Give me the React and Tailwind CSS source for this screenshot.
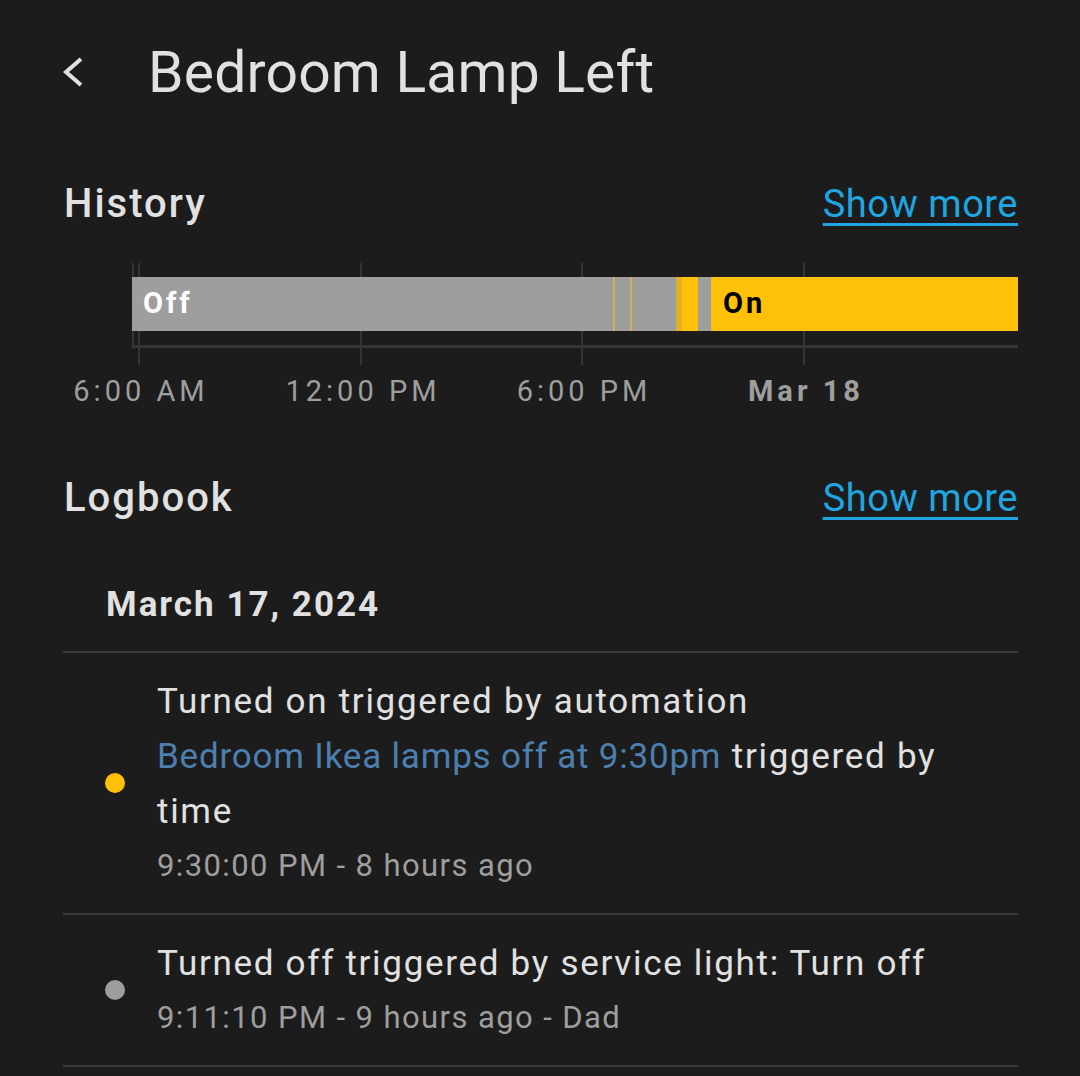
import React from 'react';

const font = { fontFamily: 'Roboto, "Noto Sans", sans-serif' };

const ticks = [
  { x: 7, label: '6:00 AM' },
  { x: 229, label: '12:00 PM' },
  { x: 450, label: '6:00 PM' },
  { x: 672, label: 'Mar 18', bold: true },
];

const HistoryChart = () => {
  return (
    <div className="relative ml-[132px] mt-[35px] h-[147px] w-[886px]">
      {/* grid lines */}
      <div className="absolute left-0 top-0 h-[85px] w-[2px] bg-[#353535]" />
      {ticks.map((t) => (
        <div
          key={t.label}
          className="absolute top-0 h-[102px] w-[2px] bg-[#353535]"
          style={{ left: t.x - 1 }}
        />
      ))}
      <div className="absolute left-0 top-[82px] h-[3px] w-[886px] bg-[#353535]" />

      {/* timeline bar */}
      <div className="absolute left-0 top-[14px] flex h-[54px] w-[886px]">
        <div className="relative flex w-[544px] items-center bg-[#9e9e9e] pl-[11px]">
          <span className="text-[29px] font-bold tracking-[3px] text-white">Off</span>
          <div className="absolute left-[481px] top-0 h-full w-[2px] bg-[#d4b05a]" />
          <div className="absolute left-[498px] top-0 h-full w-[2px] bg-[#d4b05a]" />
        </div>
        <div className="w-[6px] bg-[#e0b325]" />
        <div className="w-[16px] bg-[#ffc107]" />
        <div className="w-[13px] bg-[#9e9e9e]" />
        <div className="flex flex-1 items-center bg-[#ffc107] pl-[12px]">
          <span className="text-[29px] font-bold tracking-[3px] text-black">On</span>
        </div>
      </div>

      {/* axis labels */}
      {ticks.map((t) => (
        <div
          key={t.label + '-l'}
          className={`absolute top-[111px] flex h-[36px] w-[220px] items-center justify-center text-[29px] tracking-[4px] text-[#9e9e9e] ${t.bold ? 'font-bold' : ''}`}
          style={{ left: t.x - 108 }}
        >
          {t.label}
        </div>
      ))}
    </div>
  );
};

const SectionHeader = ({ title, className }) => (
  <div className={`flex h-[48px] items-center justify-between pl-[64px] pr-[62px] ${className}`}>
    <h2 className="text-[40px] font-medium tracking-[2px] text-[#e1e1e1]">{title}</h2>
    <a className="text-[38px] tracking-[0.5px] text-[#1fa6e0] underline decoration-[3px] underline-offset-[6px]">
      Show more
    </a>
  </div>
);

const LogEntry = ({ color, children, meta }) => (
  <div className="flex items-center border-b-2 border-[#3a3a3a] py-[21px] pl-[42px]">
    <div className={`h-[20px] w-[20px] shrink-0 rounded-full ${color}`} />
    <div className="ml-[32px] flex-1 pr-[40px]">
      <div className="text-[35px] leading-[55px] tracking-[1.7px] text-[#e1e1e1]">{children}</div>
      <div className="text-[31px] leading-[53px] tracking-[1.4px] text-[#9e9e9e]">{meta}</div>
    </div>
  </div>
);

export default function App() {
  return (
    <div className="min-h-[1076px] w-[1080px] overflow-hidden bg-[#1c1c1c]" style={font}>
      {/* header */}
      <div className="flex h-[146px] items-center">
        <svg className="ml-[62px]" width="24" height="34" viewBox="0 0 24 34" fill="none">
          <path d="M19 3 L4 16 L19 29" stroke="#e1e1e1" strokeWidth="4" strokeLinejoin="miter" />
        </svg>
        <h1 className="ml-[62px] text-[57px] tracking-[0.2px] text-[#e1e1e1]">Bedroom Lamp Left</h1>
      </div>

      <SectionHeader title="History" className="mt-[34px]" />
      <HistoryChart />

      <SectionHeader title="Logbook" className="mt-[64px]" />

      {/* logbook */}
      <div className="ml-[63px] mr-[62px]">
        <div className="mt-[61px] flex h-[44px] items-center pl-[43px]">
          <span className="text-[35px] font-bold tracking-[2px] text-[#e1e1e1]">March 17, 2024</span>
        </div>
        <div className="mt-[24px] border-b-2 border-[#3a3a3a]" />
        <LogEntry color="bg-[#ffc107]" meta="9:30:00 PM - 8 hours ago">
          Turned on triggered by automation{' '}
          <span className="whitespace-nowrap tracking-[0.8px] text-[#4d7fae]">Bedroom Ikea lamps off at 9:30pm</span> triggered by time
        </LogEntry>
        <LogEntry color="bg-[#9e9e9e]" meta="9:11:10 PM - 9 hours ago - Dad">
          Turned off triggered by service light: Turn off
        </LogEntry>
      </div>
    </div>
  );
}
